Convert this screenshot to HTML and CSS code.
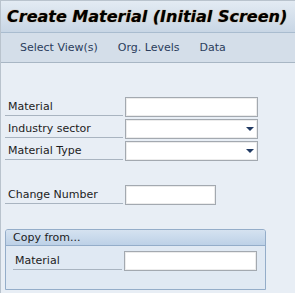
FILE: index.html
```html
<!DOCTYPE html>
<html lang="en">
<head>
    <meta charset="UTF-8">
    <title>Create Material (Initial Screen)</title>
    <link rel="stylesheet" href="styles.css">
</head>
<body>
    <div class="screen">
        <!-- title -->
        <div class="titlebar">
            <h1>Create Material (Initial Screen)</h1>
        </div>

        <!-- application toolbar -->
        <div class="toolbar">
            <span class="tb-item">Select View(s)</span>
            <span class="tb-item">Org. Levels</span>
            <span class="tb-item">Data</span>
        </div>

        <div class="content">
            <div class="block">
                <div class="row">
                    <span class="label">Material</span>
                    <span class="field long"></span>
                </div>
                <div class="row">
                    <span class="label">Industry sector</span>
                    <span class="field long drop"><i class="arrow"></i></span>
                </div>
                <div class="row">
                    <span class="label">Material Type</span>
                    <span class="field long drop"><i class="arrow"></i></span>
                </div>
            </div>

            <div class="block">
                <div class="row">
                    <span class="label">Change Number</span>
                    <span class="field short"></span>
                </div>
            </div>

            <!-- copy from group -->
            <div class="group">
                <div class="group-head">Copy from...</div>
                <div class="group-body">
                    <div class="row">
                        <span class="label">Material</span>
                        <span class="field long"></span>
                    </div>
                </div>
            </div>
        </div>
    </div>
</body>
</html>
```

FILE: styles.css
```css
body {
    margin: 0;
    font-family: "DejaVu Sans", sans-serif;
    background-color: #e8eef5;
    overflow: hidden;
}

.screen {
    width: 295px;
    height: 293px;
    border-left: 1px solid #b9c3cd;
    border-top: 1px solid #b9c3cd;
    box-sizing: border-box;
    display: flex;
    flex-direction: column;
}

.titlebar {
    height: 31px;
    background: linear-gradient(#e3ebf3, #c8d6e5);
    border-bottom: 1px solid #a9bccf;
    display: flex;
    align-items: center;
    padding-left: 6px;
}

.titlebar h1 {
    margin: 0;
    font-size: 16px;
    font-weight: bold;
    font-style: italic;
    color: #000;
    text-shadow: 0 0 1px #b07a3c;
}

.toolbar {
    height: 29px;
    background-color: #d4dee9;
    border-bottom: 1px solid #a8b6c4;
    display: flex;
    align-items: center;
    padding-left: 19px;
    gap: 20px;
}

.tb-item {
    font-size: 11px;
    color: #2b3d5c;
}

.content {
    flex: 1;
    padding: 34px 0 0 4px;
    display: flex;
    flex-direction: column;
    gap: 24px;
}

.block {
    display: flex;
    flex-direction: column;
    gap: 2px;
}

.row {
    display: flex;
    align-items: flex-start;
    height: 20px;
}

.label {
    width: 115px;
    height: 18px;
    padding-left: 3px;
    border-bottom: 1px solid #a9b4c0;
    font-size: 11px;
    line-height: 20px;
    color: #1c1c1c;
    margin-right: 2px;
}

.field {
    position: relative;
    height: 20px;
    box-sizing: border-box;
    background-color: #fff;
    border: 1px solid #a3a9b0;
    box-shadow: inset 0 0 0 1px #ececec;
}

.long {
    width: 133px;
}

.short {
    width: 91px;
}

.arrow {
    position: absolute;
    right: 3px;
    top: 7px;
    width: 0;
    height: 0;
    border-left: 4px solid transparent;
    border-right: 4px solid transparent;
    border-top: 4px solid #213a63;
}

.group {
    width: 261px;
    border: 1px solid #94adc9;
    border-radius: 3px 3px 0 0;
    background-color: #e0e9f3;
    box-sizing: border-box;
}

.group-head {
    height: 15px;
    background: linear-gradient(#d5e2f0, #bdd1e7);
    border-bottom: 1px solid #94adc9;
    border-radius: 2px 2px 0 0;
    font-size: 11px;
    line-height: 15px;
    padding-left: 7px;
    color: #1c1c1c;
}

.group-body {
    padding: 5px 0 18px 7px;
}

.group-body .label {
    width: 107px;
    padding-left: 2px;
}
```
